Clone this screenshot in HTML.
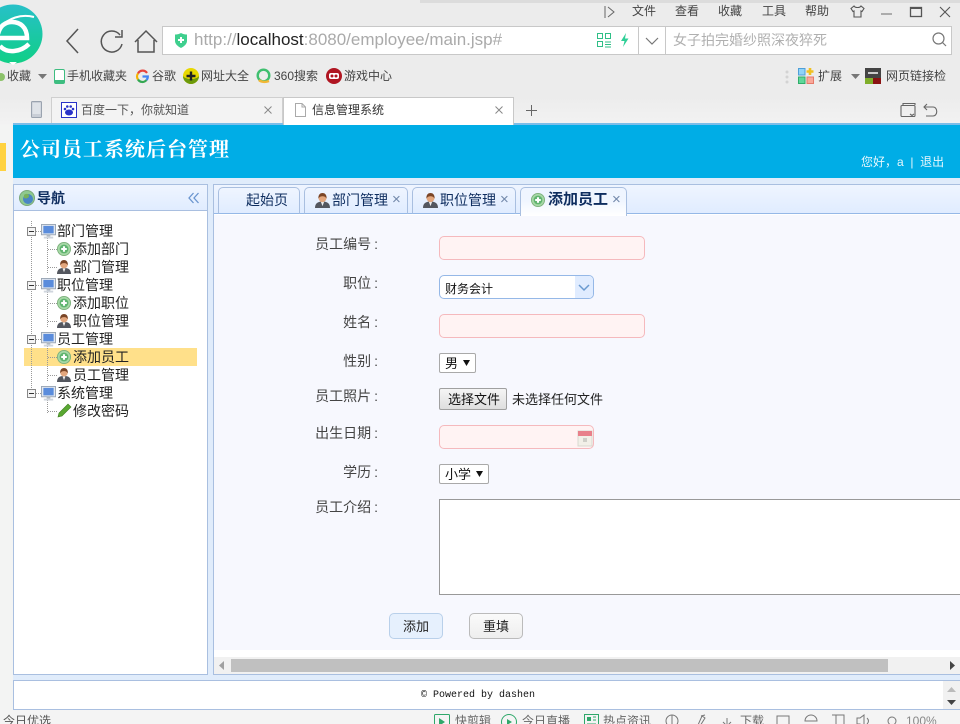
<!DOCTYPE html>
<html lang="zh">
<head>
<meta charset="utf-8">
<title>信息管理系统</title>
<style>
html,body{margin:0;padding:0;}
body{width:960px;height:724px;overflow:hidden;position:relative;background:#f3f3f3;font-family:"Liberation Sans","Noto Sans CJK SC",sans-serif;color:#333;}
.a{position:absolute;box-sizing:border-box;}
.t{position:absolute;white-space:nowrap;line-height:18px;font-size:12px;}
.ch{color:#444;}
svg{position:absolute;overflow:visible;}
.tab{position:absolute;top:187px;height:27px;box-sizing:border-box;border:1px solid #a9bfe0;border-bottom:1px solid #95b8e7;border-radius:5px 5px 0 0;background:linear-gradient(#eff5ff,#e0ecff);}
.tree{font-size:14px;color:#222;}
.lab{position:absolute;width:80px;left:298px;text-align:right;font-size:14px;line-height:18px;color:#444;white-space:nowrap;}
.lab i{font-style:normal;padding-left:3px;}
.inp{position:absolute;left:439px;height:24px;box-sizing:border-box;background:#fff3f3;border:1px solid #f5b9bd;border-radius:5px;}
.sel{position:absolute;left:439px;height:20px;box-sizing:border-box;background:#fff;border:1px solid #a9a9a9;border-radius:2px;font-size:13px;line-height:20px;padding-left:5px;color:#111;white-space:nowrap;}
.x{position:absolute;top:191px;font-size:15px;line-height:18px;color:#7288aa;}
</style>
</head>
<body>
<svg width="0" height="0" style="position:absolute">
<defs>
<symbol id="plus" viewBox="0 0 16 16"><circle cx="8" cy="8" r="7.500" fill="#a6d8a6" stroke="#7bb07b"/><circle cx="8" cy="8" r="5" fill="#5fb46f"/><path d="M8 4.800v6.400M4.800 8h6.400" stroke="#fff" stroke-width="2.400"/></symbol>
<symbol id="man" viewBox="0 0 16 16"><path d="M0 16c0-5 3-7 8-7s8 2 8 7z" fill="#54575f"/><path d="M6.300 9.500L8 14l1.700-4.500z" fill="#eee"/><circle cx="8" cy="5.500" r="4.200" fill="#e3a77e"/><path d="M3.600 6C3.300 1.500 5.800 0 8 0s4.700 1.500 4.400 6C11 3.800 9.500 3.500 8 3.500S5 3.800 3.600 6z" fill="#7a4526"/></symbol>
<symbol id="pc" viewBox="0 0 16 16"><rect x=".5" y=".5" width="15" height="11" fill="#e3e8ef" stroke="#9aa6b5"/><rect x="2.500" y="2" width="11" height="8" fill="#5a8cdc"/><rect x="6" y="11.500" width="4" height="2" fill="#aeb7c2"/><rect x="3" y="13.500" width="10" height="2" fill="#cfd5dd"/></symbol>
</defs>
</svg>

<!-- browser chrome -->
<div class="a" style="left:0;top:0;width:960px;height:97px;background:#ececec;"></div>
<div class="a" style="left:420px;top:0;width:540px;height:3px;background:#dcdcdc;"></div>
<div class="a" style="left:0;top:97px;width:960px;height:27px;background:linear-gradient(#ececec,#f2f2f2);"></div>

<!-- logo -->
<svg style="left:0;top:0" width="50" height="66" viewBox="0 0 50 66">
<defs><linearGradient id="lg" x1="0" y1="0" x2="0" y2="1"><stop offset="0" stop-color="#27c0c8"/><stop offset="1" stop-color="#10cf86"/></linearGradient></defs>
<circle cx="13" cy="34" r="29.500" fill="url(#lg)"/>
<path d="M9 62l4 3 4-3z" fill="#fff"/>
<path d="M0 38H27C27 27 20 22 12 22C5 22 0 26-2 34M0 46C7 54 21 52 29 44" fill="none" stroke="#fff" stroke-width="4.500"/>
<path d="M-2 30C8 17 22 14 34 17" fill="none" stroke="#fff" stroke-width="2"/>
</svg>

<!-- nav buttons -->
<svg style="left:64px;top:28px" width="110" height="26" viewBox="0 0 110 26" fill="none" stroke="#555" stroke-width="1.500">
<path d="M14 1L3 13l11 12"/>
<path d="M56 7a10.500 10.500 0 1 0 2 9"/><path d="M58 2v7h-7" />
<path d="M71 14L82 3l11 11M74 12v12h16V12"/>
</svg>

<!-- address bar -->
<div class="a" style="left:162px;top:26px;width:790px;height:29px;background:#fff;border:1px solid #c8c8c8;"></div>
<div class="a" style="left:638px;top:27px;width:1px;height:27px;background:#c8c8c8;"></div>
<div class="a" style="left:665px;top:27px;width:1px;height:27px;background:#c8c8c8;"></div>
<svg style="left:174px;top:33px" width="14" height="15" viewBox="0 0 14 15"><path d="M1 1.500C4 1.500 5 1 7 0c2 1 3 1.500 6 1.500V8c0 3-3 5.500-6 7-3-1.500-6-4-6-7z" fill="#3fcf8e"/><path d="M7 4v6M4 7h6" stroke="#fff" stroke-width="2"/></svg>
<div class="t" style="left:194px;top:29px;font-size:17px;line-height:22px;color:#aaa;">http://<span style="color:#222">localhost</span>:8080/employee/main.jsp#</div>
<svg style="left:597px;top:33px" width="36" height="15" viewBox="0 0 36 15" fill="none" stroke="#2fbf87">
<rect x=".5" y=".5" width="5" height="5"/><rect x="8.500" y=".5" width="5" height="5"/><rect x=".5" y="8.500" width="5" height="5"/><path d="M8 9h6M8 11.500h6M8 14h6"/>
<path d="M29 0l-5 8h3.500l-1.500 6 5.500-8.500H28z" fill="#2fcf97" stroke="none"/>
</svg>
<svg style="left:645px;top:37px" width="14" height="8" viewBox="0 0 14 8"><path d="M1 1l6 6 6-6" fill="none" stroke="#777" stroke-width="1.200"/></svg>
<div class="t" style="left:673px;top:30px;font-size:14px;line-height:20px;color:#b0b0b0;">女子拍完婚纱照深夜猝死</div>
<svg style="left:932px;top:32px" width="15" height="15" viewBox="0 0 15 15" fill="none" stroke="#777" stroke-width="1.200"><circle cx="6.500" cy="6.500" r="5.500"/><path d="M10.500 10.500l3.500 3.500"/></svg>

<!-- top right menu -->
<svg style="left:604px;top:6px" width="11" height="12" viewBox="0 0 11 12" fill="none" stroke="#666"><path d="M1 0v12M4 1l6 5-6 5"/></svg>
<div class="t ch" style="left:632px;top:2px;">文件</div>
<div class="t ch" style="left:675px;top:2px;">查看</div>
<div class="t ch" style="left:718px;top:2px;">收藏</div>
<div class="t ch" style="left:762px;top:2px;">工具</div>
<div class="t ch" style="left:805px;top:2px;">帮助</div>
<svg style="left:850px;top:5px" width="105" height="14" viewBox="0 0 105 14" fill="none" stroke="#555" stroke-width="1.100">
<path d="M4 1L1 3.500 3 6.500l1-.5v6h7V6l1 .5 2-3L11 1C10 3 5 3 4 1z"/>
<path d="M31 9h11" stroke="#777"/>
<rect x="60.500" y="2.500" width="11" height="9" stroke-width="1.300"/><path d="M60 3h12" stroke-width="2"/>
<path d="M90 2l10 10M100 2L90 12"/>
</svg>

<!-- bookmarks -->
<svg style="left:-3px;top:71px" width="10" height="12" viewBox="0 0 10 12"><circle cx="4" cy="6" r="4" fill="#8cc26a"/></svg>
<div class="t ch" style="left:7px;top:67px;">收藏</div>
<svg style="left:38px;top:74px" width="9" height="5" viewBox="0 0 9 5"><path d="M0 0h9L4.500 5z" fill="#777"/></svg>
<svg style="left:54px;top:69px" width="11" height="15" viewBox="0 0 11 15"><rect x=".5" y=".5" width="10" height="14" rx="1.500" fill="#fff" stroke="#3dbd80"/><rect x="1" y="11" width="9" height="3" fill="#3dbd80"/></svg>
<div class="t ch" style="left:67px;top:67px;">手机收藏夹</div>
<svg style="left:136px;top:70px" width="13" height="13" viewBox="0 0 13 13" fill="none" stroke-width="2.200"><path d="M11 3A5.200 5.200 0 0 0 2 3.500" stroke="#e8453c"/><path d="M2 3.500a5.200 5.200 0 0 0 0 6" stroke="#f5b400"/><path d="M2 9.500a5.200 5.200 0 0 0 8.500 .5" stroke="#34a853"/><path d="M10.500 10c1-1 1.300-2 1.300-3.500H6.500" stroke="#4285f4"/></svg>
<div class="t ch" style="left:152px;top:67px;">谷歌</div>
<svg style="left:183px;top:68px" width="16" height="16" viewBox="0 0 16 16"><circle cx="8" cy="8" r="8" fill="#e8d800"/><path d="M0 8a8 8 0 0 0 16 0c-3 4-13 4-16 0z" fill="#6d9a0a"/><path d="M8 3.500v9M3.500 8h9" stroke="#222" stroke-width="2.400"/></svg>
<div class="t ch" style="left:201px;top:67px;">网址大全</div>
<svg style="left:256px;top:68px" width="16" height="16" viewBox="0 0 16 16" fill="none" stroke-width="2.400"><circle cx="7.500" cy="7.500" r="5.800" stroke="#3fbf6f"/><path d="M3 12c2 2 6 2.500 10 1" stroke="#f2b736"/></svg>
<div class="t ch" style="left:274px;top:67px;">360搜索</div>
<svg style="left:326px;top:68px" width="16" height="16" viewBox="0 0 16 16"><circle cx="8" cy="8" r="8" fill="#b01622"/><rect x="3" y="5" width="10" height="6" rx="2" fill="#fff"/><circle cx="6" cy="8" r="1.500" fill="#b01622"/><circle cx="10" cy="8" r="1.500" fill="#b01622"/></svg>
<div class="t ch" style="left:344px;top:67px;">游戏中心</div>

<svg style="left:785px;top:70px" width="4" height="14" viewBox="0 0 4 14"><circle cx="2" cy="2" r="1.500" fill="#d3d3d3"/><circle cx="2" cy="7" r="1.500" fill="#d3d3d3"/><circle cx="2" cy="12" r="1.500" fill="#d3d3d3"/></svg>
<svg style="left:798px;top:68px" width="16" height="16" viewBox="0 0 16 16"><rect x=".5" y=".5" width="6.500" height="6.500" fill="#8fd3f8" stroke="#4f9fd8"/><rect x=".5" y="9" width="6.500" height="6.500" fill="#5fd79a" stroke="#2fae6a"/><rect x="9" y="9" width="6.500" height="6.500" fill="#f9a89a" stroke="#e57a6a"/><path d="M12 0v7M8.500 3.500h7" stroke="#f0c020" stroke-width="2.600"/></svg>
<div class="t ch" style="left:818px;top:67px;">扩展</div>
<svg style="left:851px;top:74px" width="9" height="5" viewBox="0 0 9 5"><path d="M0 0h9L4.500 5z" fill="#777"/></svg>
<svg style="left:865px;top:68px" width="16" height="16" viewBox="0 0 16 16"><rect width="16" height="10" fill="#444"/><rect y="10" width="8" height="6" fill="#7fae2a"/><rect x="8" y="10" width="8" height="6" fill="#8a1212"/><rect x="3" y="4" width="10" height="2" fill="#ccc"/></svg>
<div class="t ch" style="left:886px;top:67px;">网页链接检</div>

<!-- browser tabs -->
<svg style="left:31px;top:101px" width="11" height="17" viewBox="0 0 11 17"><rect x=".5" y=".5" width="10" height="16" rx="1" fill="#c9ced6" stroke="#9aa3af"/><rect x="1.500" y="2" width="8" height="11" fill="#dfe3e8"/></svg>
<div class="a" style="left:51px;top:97px;width:232px;height:27px;background:#f3f3f3;border:1px solid #cfcfcf;border-bottom:none;"></div>
<svg style="left:61px;top:102px" width="16" height="16" viewBox="0 0 16 16"><rect x=".5" y=".5" width="15" height="15" fill="#fff" stroke="#2932c8"/><ellipse cx="8" cy="10.500" rx="4" ry="3" fill="#2932c8"/><circle cx="4" cy="7" r="1.300" fill="#2932c8"/><circle cx="12" cy="7" r="1.300" fill="#2932c8"/><circle cx="6.300" cy="4.500" r="1.300" fill="#2932c8"/><circle cx="9.700" cy="4.500" r="1.300" fill="#2932c8"/></svg>
<div class="t" style="left:81px;top:101px;color:#555;">百度一下，你就知道</div>
<svg style="left:264px;top:106px" width="8" height="8" viewBox="0 0 8 8"><path d="M.5.5l7 7M7.500.5l-7 7" stroke="#888"/></svg>
<div class="a" style="left:283px;top:97px;width:231px;height:28px;background:#fff;border:1px solid #c8c8c8;border-bottom:none;z-index:3;"></div>
<svg style="left:295px;top:103px;z-index:4" width="11" height="14" viewBox="0 0 11 14"><path d="M.5.5h6.500l3.500 3.500v9.500H.5zM7 .5V4h3.500" fill="#fff" stroke="#aaa"/></svg>
<div class="t" style="left:312px;top:101px;color:#333;z-index:4;">信息管理系统</div>
<svg style="left:495px;top:106px;z-index:4" width="8" height="8" viewBox="0 0 8 8"><path d="M.5.5l7 7M7.500.5l-7 7" stroke="#888"/></svg>
<svg style="left:526px;top:105px" width="11" height="11" viewBox="0 0 11 11"><path d="M5.500 0v11M0 5.500h11" stroke="#666"/></svg>
<svg style="left:900px;top:102px" width="40" height="16" viewBox="0 0 40 16" fill="none" stroke="#666" stroke-width="1.100"><path d="M3 3V1.500h12V3"/><rect x="1" y="3.500" width="14" height="11" rx="1"/><path d="M10 12l2 1.500 2-1.500"/><path d="M27 2l-3 3 3 3M24 5h9c5 0 5 9 0 9h-7"/></svg>

<!-- blue line -->
<div class="a" style="left:13px;top:123px;width:947px;height:2px;background:#7cbde9;"></div>

<!-- left strip -->
<div class="a" style="left:0;top:125px;width:13px;height:585px;background:#f3f4f3;"></div>
<div class="a" style="left:0;top:143px;width:6px;height:28px;background:#ffd23f;"></div>

<!-- app bg -->
<div class="a" style="left:13px;top:125px;width:947px;height:585px;background:#e0ecfb;"></div>
<!-- header -->
<div class="a" style="left:13px;top:125px;width:947px;height:53px;background:#00ade6;"></div>
<div class="t" style="left:20px;top:136px;font-family:'Liberation Serif','Noto Serif CJK SC',serif;font-weight:700;font-size:20px;line-height:28px;color:#fff;letter-spacing:1px;">公司员工系统后台管理</div>
<div class="t" style="left:861px;top:153px;color:#fff;opacity:.9;">您好，a&nbsp;&nbsp;|&nbsp;&nbsp;退出</div>

<!-- left panel -->
<div class="a" style="left:13px;top:184px;width:195px;height:491px;background:#fff;border:1px solid #a9bfe0;"></div>
<div class="a" style="left:14px;top:185px;width:193px;height:26px;background:linear-gradient(#eff5ff,#e0ecff);border-bottom:1px solid #a9bfe0;"></div>
<svg style="left:19px;top:190px" width="16" height="16" viewBox="0 0 16 16"><circle cx="8" cy="8" r="7.500" fill="#8fc98f" stroke="#7aa87a"/><circle cx="9" cy="9" r="5" fill="#4a86c4"/><path d="M5 5c2-2 5-1 5 1s-3 3-5 2z" fill="#78b15a"/></svg>
<div class="t" style="left:37px;top:189px;font-size:14px;font-weight:700;color:#0e2d5f;">导航</div>
<svg style="left:188px;top:192px" width="11" height="12" viewBox="0 0 11 12" fill="none" stroke="#6a95cf" stroke-width="1.300"><path d="M5.500 1L1 6l4.500 5M10.500 1L6 6l4.500 5"/></svg>

<!-- tree -->
<div class="a" style="left:24px;top:348px;width:173px;height:18px;background:#ffe08a;"></div>
<svg style="left:0;top:0" width="210" height="430" viewBox="0 0 210 430" fill="none" stroke="#999" stroke-dasharray="1 1">
<path d="M31.500 221v172M47.500 238v35M47.500 292v35M47.500 346v35M47.500 400v13"/>
<path d="M48 249.500h9M48 267.500h9M48 303.500h9M48 321.500h9M48 357.500h9M48 375.500h9M48 411.500h9"/>
<path d="M36 231.500h6M36 285.500h6M36 339.500h6M36 393.500h6"/>
</svg>
<svg style="left:0;top:0" width="210" height="430" viewBox="0 0 210 430">
<g fill="#f4f4f4" stroke="#888"><rect x="27.500" y="227.500" width="8" height="8"/><rect x="27.500" y="281.500" width="8" height="8"/><rect x="27.500" y="335.500" width="8" height="8"/><rect x="27.500" y="389.500" width="8" height="8"/></g>
<path d="M29 231.500h5M29 285.500h5M29 339.500h5M29 393.500h5" stroke="#333"/>
<use href="#pc" x="41" y="224" width="15" height="15"/><use href="#pc" x="41" y="278" width="15" height="15"/><use href="#pc" x="41" y="332" width="15" height="15"/><use href="#pc" x="41" y="386" width="15" height="15"/>
<use href="#plus" x="57" y="242" width="14" height="14"/><use href="#plus" x="57" y="296" width="14" height="14"/><use href="#plus" x="57" y="350" width="14" height="14"/>
<use href="#man" x="57" y="260" width="14" height="14"/><use href="#man" x="57" y="314" width="14" height="14"/><use href="#man" x="57" y="368" width="14" height="14"/>
<path d="M58 417l1-4 9-9 3 3-9 9z" fill="#5aa832" stroke="#3e7e20" stroke-width=".6"/>
</svg>
<div class="t tree" style="left:57px;top:222px;">部门管理</div>
<div class="t tree" style="left:73px;top:240px;">添加部门</div>
<div class="t tree" style="left:73px;top:258px;">部门管理</div>
<div class="t tree" style="left:57px;top:276px;">职位管理</div>
<div class="t tree" style="left:73px;top:294px;">添加职位</div>
<div class="t tree" style="left:73px;top:312px;">职位管理</div>
<div class="t tree" style="left:57px;top:330px;">员工管理</div>
<div class="t tree" style="left:73px;top:348px;">添加员工</div>
<div class="t tree" style="left:73px;top:366px;">员工管理</div>
<div class="t tree" style="left:57px;top:384px;">系统管理</div>
<div class="t tree" style="left:73px;top:402px;">修改密码</div>

<!-- right panel -->
<div class="a" style="left:213px;top:184px;width:748px;height:491px;background:#fff;border:1px solid #a9bfe0;"></div>
<div class="a" style="left:214px;top:185px;width:746px;height:29px;background:linear-gradient(#eff5ff,#e0ecff);border-bottom:1px solid #95b8e7;"></div>
<div class="tab" style="left:218px;width:82px;"></div>
<div class="t" style="left:246px;top:191px;font-size:14px;color:#0e2d5f;">起始页</div>
<div class="tab" style="left:304px;width:104px;"></div>
<svg style="left:315px;top:193px" width="15" height="15"><use href="#man" width="15" height="15"/></svg>
<div class="t" style="left:332px;top:191px;font-size:14px;color:#0e2d5f;">部门管理</div>
<div class="x" style="left:392px;">×</div>
<div class="tab" style="left:412px;width:104px;"></div>
<svg style="left:423px;top:193px" width="15" height="15"><use href="#man" width="15" height="15"/></svg>
<div class="t" style="left:440px;top:191px;font-size:14px;color:#0e2d5f;">职位管理</div>
<div class="x" style="left:500px;">×</div>
<div class="tab" style="left:520px;width:107px;height:29px;background:linear-gradient(#eff5ff 40%,#fff);border-bottom:none;z-index:2;"></div>
<svg style="left:531px;top:193px;z-index:3" width="14" height="14"><use href="#plus" width="14" height="14"/></svg>
<div class="t" style="left:548px;top:191px;font-size:15px;font-weight:700;color:#0e2d5f;z-index:3;">添加员工</div>
<div class="x" style="left:612px;z-index:3;">×</div>

<!-- content -->
<div class="a" style="left:214px;top:215px;width:746px;height:435px;background:#f7f8fe;"></div>

<div class="lab" style="top:235px;">员工编号<i>:</i></div>
<div class="inp" style="top:236px;width:206px;"></div>
<div class="lab" style="top:274px;">职位<i>:</i></div>
<div class="a" style="left:439px;top:275px;width:155px;height:24px;background:#fff;border:1px solid #95b8e7;border-radius:5px;overflow:hidden;">
  <div class="a" style="right:0;top:0;width:18px;height:22px;background:#e0ecff;"></div>
  <svg style="right:3px;top:8px" width="12" height="7" viewBox="0 0 12 7"><path d="M1 1l5 5 5-5" fill="none" stroke="#6a9ad0" stroke-width="1.500"/></svg>
</div>
<div class="t" style="left:445px;top:280px;color:#111;">财务会计</div>
<div class="lab" style="top:313px;">姓名<i>:</i></div>
<div class="inp" style="top:314px;width:206px;"></div>
<div class="lab" style="top:352px;">性别<i>:</i></div>
<div class="sel" style="top:353px;width:37px;">男</div>
<svg style="left:463px;top:360px" width="7" height="6" viewBox="0 0 7 6"><path d="M0 0h7L3.500 6z" fill="#111"/></svg>
<div class="lab" style="top:387px;">员工照片<i>:</i></div>
<div class="a" style="left:439px;top:388px;width:68px;height:22px;background:linear-gradient(#f5f5f5,#dedede);border:1px solid #a0a0a0;border-radius:2px;"></div>
<div class="t" style="left:448px;top:391px;font-size:13px;color:#111;">选择文件</div>
<div class="t" style="left:512px;top:391px;font-size:13px;color:#222;">未选择任何文件</div>
<div class="lab" style="top:424px;">出生日期<i>:</i></div>
<div class="inp" style="top:425px;width:155px;"></div>
<svg style="left:577px;top:430px" width="16" height="16" viewBox="0 0 16 16"><rect x="1" y="1" width="14" height="15" fill="#f2f0e8" stroke="#d8d8d0"/><rect x="1" y="1" width="14" height="5" fill="#e8808a"/><rect x="6" y="8" width="4" height="4" fill="#cfcfc8"/></svg>
<div class="lab" style="top:463px;">学历<i>:</i></div>
<div class="sel" style="top:464px;width:50px;">小学</div>
<svg style="left:476px;top:471px" width="7" height="6" viewBox="0 0 7 6"><path d="M0 0h7L3.500 6z" fill="#111"/></svg>
<div class="lab" style="top:498px;">员工介绍<i>:</i></div>
<div class="a" style="left:439px;top:499px;width:540px;height:96px;background:#fff;border:1px solid #999;"></div>

<div class="a" style="left:389px;top:613px;width:54px;height:26px;background:#e6f0fd;border:1px solid #b9d0ea;border-radius:5px;font-size:13px;line-height:25px;text-align:center;color:#222;">添加</div>
<div class="a" style="left:469px;top:613px;width:54px;height:26px;background:linear-gradient(#fafafa,#eeeeee);border:1px solid #bbb;border-radius:5px;font-size:13px;line-height:25px;text-align:center;color:#222;">重填</div>

<!-- h scrollbar -->
<div class="a" style="left:214px;top:657px;width:746px;height:17px;background:#f1f1f1;"></div>
<div class="a" style="left:231px;top:659px;width:657px;height:13px;background:#c0c0c0;"></div>
<svg style="left:219px;top:661px" width="5" height="9" viewBox="0 0 5 9"><path d="M5 0v9L0 4.500z" fill="#a0a0a0"/></svg>
<svg style="left:950px;top:661px" width="5" height="9" viewBox="0 0 5 9"><path d="M0 0v9l5-4.500z" fill="#444"/></svg>

<!-- footer -->
<div class="a" style="left:13px;top:680px;width:947px;height:30px;background:#fff;border:1px solid #a9bfe0;border-right:none;"></div>
<div class="t" style="left:421px;top:687px;font-family:'Liberation Mono',monospace;font-size:10px;color:#111;">© Powered by dashen</div>
<div class="a" style="left:943px;top:681px;width:17px;height:28px;background:#f1f1f1;"></div>
<svg style="left:947px;top:687px" width="9" height="18" viewBox="0 0 9 18"><path d="M0 5l4.500-5L9 5z" fill="#bbb"/><path d="M0 13l4.500 5L9 13z" fill="#444"/></svg>

<!-- status bar -->
<div class="a" style="left:0;top:710px;width:960px;height:14px;background:#f4f4f4;overflow:hidden;">
  <div class="t" style="left:3px;top:2px;color:#555;">今日优选</div>
  <svg style="left:434px;top:4px" width="16" height="16" viewBox="0 0 16 16"><rect x=".5" y=".5" width="15" height="15" rx="1" fill="none" stroke="#2fa86a"/><path d="M5 4l6 4-6 4z" fill="#2fa86a"/></svg>
  <div class="t" style="left:455px;top:2px;color:#666;">快剪辑</div>
  <svg style="left:501px;top:4px" width="16" height="16" viewBox="0 0 16 16"><circle cx="8" cy="8" r="7.500" fill="none" stroke="#2fa86a"/><path d="M6 5l5 3-5 3z" fill="#2fa86a"/></svg>
  <div class="t" style="left:522px;top:2px;color:#666;">今日直播</div>
  <svg style="left:584px;top:4px" width="15" height="16" viewBox="0 0 15 16"><rect x=".5" y=".5" width="14" height="15" fill="none" stroke="#2fa86a"/><rect x="3" y="3" width="4" height="4" fill="#2fa86a"/><path d="M9 3h3M9 6h3M3 10h9" stroke="#2fa86a"/></svg>
  <div class="t" style="left:603px;top:2px;color:#666;">热点资讯</div>
  <svg style="left:665px;top:3px" width="210" height="16" viewBox="0 0 210 16" fill="none" stroke="#777"><circle cx="7" cy="8" r="6"/><path d="M7 2v12"/><path d="M33 12l4-9 3 2-5 8zM36 3l4-1"/><path d="M62 5v7M58 9l4 4 4-4"/><rect x="112" y="3" width="12" height="10"/><path d="M140 8a6 6 0 0 1 12 0zM167 2h12v12M171 2v12"/></svg>
  <div class="t" style="left:740px;top:2px;color:#666;">下载</div>
  <svg style="left:855px;top:3px" width="40" height="16" viewBox="0 0 40 16" fill="none" stroke="#777"><path d="M2 5h3l4-3v12l-4-3H2zM12 5c2 2 2 4 0 6"/><circle cx="37" cy="8" r="4"/></svg>
  <div class="t" style="left:906px;top:2px;color:#888;">100%</div>
</div>
</body>
</html>
